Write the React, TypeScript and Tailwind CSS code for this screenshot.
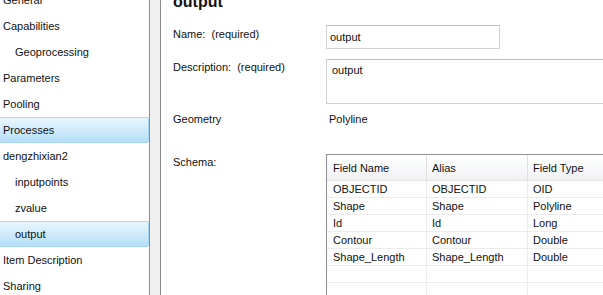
import React from 'react';

const navItems = [
  { label: 'General', indent: false, selected: false },
  { label: 'Capabilities', indent: false, selected: false },
  { label: 'Geoprocessing', indent: true, selected: false },
  { label: 'Parameters', indent: false, selected: false },
  { label: 'Pooling', indent: false, selected: false },
  { label: 'Processes', indent: false, selected: true },
  { label: 'dengzhixian2', indent: false, selected: false },
  { label: 'inputpoints', indent: true, selected: false },
  { label: 'zvalue', indent: true, selected: false },
  { label: 'output', indent: true, selected: true },
  { label: 'Item Description', indent: false, selected: false },
  { label: 'Sharing', indent: false, selected: false },
];

const fields = [
  ['OBJECTID', 'OBJECTID', 'OID'],
  ['Shape', 'Shape', 'Polyline'],
  ['Id', 'Id', 'Long'],
  ['Contour', 'Contour', 'Double'],
  ['Shape_Length', 'Shape_Length', 'Double'],
  ['', '', ''],
  ['', '', ''],
];

const Sidebar: React.FC = () => (
  <div className="w-[149px] shrink-0 bg-white">
    <div className="mt-[-13px]">
      {navItems.map((item, i) => (
        <div
          key={i}
          className={`h-[26px] flex items-center ${item.indent ? 'pl-[15px]' : 'pl-[3px]'} ${
            item.selected
              ? 'bg-gradient-to-b from-[#e9f6fd] to-[#b6dff7] border border-[#a8d6f5] rounded-[2px] ml-[-1px]'
              : ''
          }`}
        >
          {item.label}
        </div>
      ))}
    </div>
  </div>
);

const SchemaTable: React.FC = () => (
  <div className="w-[320px] border-t border-l border-[#8e8f96] bg-white">
    <div className="flex h-[26px] border-b border-[#e3e3e3] bg-gradient-to-b from-white to-[#f1f2f4]">
      <div className="w-[100px] flex items-center pl-[6px] border-r border-[#e0e0e0]">Field Name</div>
      <div className="w-[101px] flex items-center pl-[5px] border-r border-[#e0e0e0]">Alias</div>
      <div className="flex-1 flex items-center pl-[5px]">Field Type</div>
    </div>
    {fields.map((row, i) => (
      <div key={i} className="flex h-[17px] border-b border-[#ececec]">
        <div className="w-[100px] flex items-center pl-[6px] border-r border-[#ececec]">{row[0]}</div>
        <div className="w-[101px] flex items-center pl-[5px] border-r border-[#ececec]">{row[1]}</div>
        <div className="flex-1 flex items-center pl-[5px]">{row[2]}</div>
      </div>
    ))}
  </div>
);

export default function App() {
  return (
    <div
      className="w-[603px] h-[295px] overflow-hidden flex bg-white text-[11px] leading-[14px] text-[#111]"
      style={{ fontFamily: '"Liberation Sans", Arial, sans-serif' }}
    >
      <Sidebar />
      <div className="w-[12px] shrink-0 bg-[#f0f0f0] border-x border-[#8b8b96]" />
      <div className="flex-1 min-w-0 pl-[12px]">
        <div className="mt-[-8px] h-[20px] text-[16px] leading-[20px] font-bold">output</div>
        <div className="flex mt-[13px]">
          <div className="w-[153px] shrink-0 pt-[2px]">Name:&nbsp; (required)</div>
          <div className="w-[174px] h-[24px] border border-[#d2d2d2] border-t-[#c0c0c0] flex items-center pl-[3px]">
            output
          </div>
        </div>
        <div className="flex mt-[10px]">
          <div className="w-[153px] shrink-0 pt-[1px]">Description:&nbsp; (required)</div>
          <div className="flex-1 h-[45px] border border-[#d2d2d2] border-t-[#c0c0c0] border-r-0 pl-[5px] pt-[3px]">
            output
          </div>
        </div>
        <div className="flex mt-[7px] leading-[16px]">
          <div className="w-[153px] shrink-0">Geometry</div>
          <div className="pl-[3px]">Polyline</div>
        </div>
        <div className="flex mt-[27px]">
          <div className="w-[153px] shrink-0 pt-[1px]">Schema:</div>
          <SchemaTable />
        </div>
      </div>
    </div>
  );
}
